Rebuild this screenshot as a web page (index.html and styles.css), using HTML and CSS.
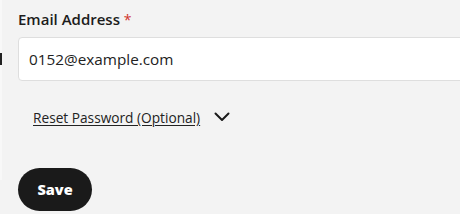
FILE: index.html
```html
<!DOCTYPE html>
<html lang="en">
<head>
    <meta charset="UTF-8">
    <title>Account Settings</title>
    <link rel="stylesheet" href="styles.css">
</head>
<body>
    <div class="edge"><span class="edge-mark"></span></div>
    <div class="form">
        <div class="field">
            <label class="field-label" for="email">Email Address <span class="required">*</span></label>
            <input class="field-input" type="text" id="email" value="0152@example.com">
        </div>

        <div class="reset-row">
            <a class="reset-link" href="#">Reset Password (Optional)</a>
            <svg class="chevron" width="16" height="10" viewBox="0 0 16 10">
                <path d="M1.5 1.5 L8 8 L14.5 1.5" fill="none" stroke="#1a1a1a" stroke-width="2" stroke-linecap="round" stroke-linejoin="round"/>
            </svg>
        </div>

        <button class="save-btn">Save</button>
    </div>
</body>
</html>
```

FILE: styles.css
```css
* {
    margin: 0;
    padding: 0;
    box-sizing: border-box;
}
body {
    background: #f3f3f3;
    font-family: 'Open Sans', Lato, sans-serif;
    color: #1c1c1c;
    width: 460px;
    height: 214px;
    overflow: hidden;
    position: relative;
}
.edge {
    position: absolute;
    left: 0;
    top: 0;
    width: 2px;
    height: 180px;
    background: #f8f8f8;
}
.edge-mark {
    position: absolute;
    left: 0;
    top: 53px;
    width: 2px;
    height: 12px;
    background: #222;
}
.form {
    padding: 10px 0 0 18px;
}
.field-label {
    display: block;
    font-size: 15px;
    font-weight: 600;
    color: #1c1c1c;
    line-height: 18px;
    margin-bottom: 8px;
}
.required {
    color: #d0342c;
    font-weight: 400;
    font-size: 14px;
}
.field-input {
    display: block;
    width: 460px;
    height: 44px;
    padding: 0 10px;
    border: 1px solid #dedede;
    border-radius: 4px;
    background: white;
    font-family: 'Open Sans', Lato, sans-serif;
    font-size: 15.3px;
    color: #222;
}
.reset-row {
    display: flex;
    align-items: center;
    gap: 14px;
    padding-left: 15px;
    margin-top: 27px;
    height: 18px;
}
.reset-link {
    font-size: 13.7px;
    color: #222;
    text-decoration: underline;
    text-underline-offset: 2px;
}
.chevron {
    display: block;
}
.save-btn {
    display: block;
    margin-top: 42px;
    width: 74px;
    height: 43px;
    border: none;
    border-radius: 22px;
    background: #1a1a1a;
    color: white;
    font-family: 'Open Sans', sans-serif;
    font-size: 14.5px;
    font-weight: 800;
    cursor: pointer;
}
```
